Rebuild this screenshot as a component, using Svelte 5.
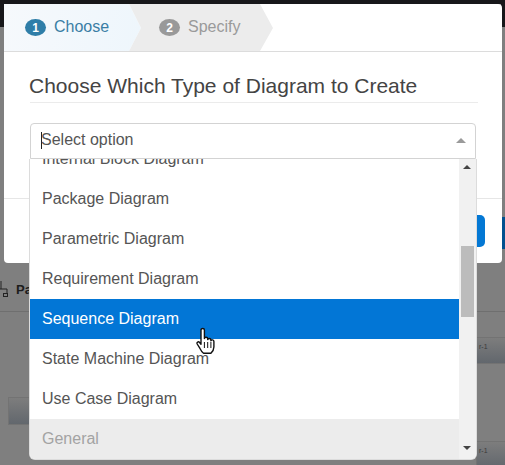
<script>
	const options = [
		{ label: 'Package Diagram' },
		{ label: 'Parametric Diagram' },
		{ label: 'Requirement Diagram' },
		{ label: 'Sequence Diagram', active: true },
		{ label: 'State Machine Diagram' },
		{ label: 'Use Case Diagram' },
		{ label: 'General', group: true }
	];
</script>

<div class="page">
	<div class="topbar"></div>
	<div class="side left"></div>
	<div class="side right"></div>

	<!-- dimmed page behind the modal -->
	<div class="backdrop-tab">
		<svg width="10" height="16" viewBox="0 0 10 16">
			<path d="M1 0v8h6v5M0 8h1" fill="none" stroke="#222" stroke-width="1" />
			<rect x="3.5" y="12.5" width="4" height="3" fill="none" stroke="#222" />
		</svg>
		<b>Pa</b>
	</div>
	<div class="backdrop-line"></div>
	<div class="node node-left"></div>
	<div class="node node-r1"><span>r-1</span></div>
	<div class="node node-r2"><span>r-1</span></div>
	<div class="peek-btn"></div>

	<div class="modal">
		<div class="steps">
			<div class="step current">
				<span class="num">1</span>Choose
			</div>
			<div class="step next">
				<span class="num">2</span>Specify
			</div>
		</div>
		<div class="body">
			<h2>Choose Which Type of Diagram to Create</h2>
			<div class="select">
				<span class="caret"></span><span class="placeholder">Select option</span>
				<span class="arrow"></span>
			</div>
		</div>
		<div class="footer">
			<div class="save"></div>
		</div>
	</div>

	<div class="dropdown">
		<div class="list">
			<div class="clipped">Internal Block Diagram</div>
			{#each options as o}
				<div class="option" class:active={o.active} class:group={o.group}>{o.label}</div>
			{/each}
		</div>
		<div class="scrollbar">
			<span class="up"></span>
			<span class="thumb"></span>
			<span class="down"></span>
		</div>
	</div>

	<svg class="hand" width="22" height="28" viewBox="0 0 22 28">
		<path
			d="M5 3c0-2 3.400-2 3.400 0v8.500c.2-1.700 3.200-1.700 3.300.2v.8c.3-1.500 3.100-1.400 3.200.4v.8c.4-1.300 3-1.100 3 .7v5.600c0 2.800-1.300 4.600-3 6.200H7.500c-1.600-1.200-2.700-3-3.700-5L1.200 17c-.8-1.700 1.200-2.900 2.400-1.500L5 17.300z"
			fill="#fff"
			stroke="#111"
			stroke-width="1.400"
			stroke-linejoin="round"
		/>
		<path d="M8.400 15v6M11.700 15v6M14.900 15v6" stroke="#111" stroke-width="1" />
	</svg>
</div>

<style>
	:global(body) {
		margin: 0;
	}
	.page {
		position: relative;
		width: 505px;
		height: 465px;
		overflow: hidden;
		background: #7f7f7f;
		font-family: 'Liberation Sans', Arial, sans-serif;
	}
	.topbar {
		height: 4px;
		background: #17171a;
	}
	.side {
		position: absolute;
		top: 0;
		height: 27px;
		background: #17171a;
	}
	.side.left {
		left: 0;
		width: 4px;
	}
	.side.right {
		right: 0;
		width: 4px;
	}
	.backdrop-tab {
		position: absolute;
		left: 0;
		top: 281px;
		display: flex;
		align-items: center;
		gap: 6px;
		font-size: 13px;
		color: #1c1c1c;
	}
	.backdrop-line {
		position: absolute;
		left: 0;
		right: 0;
		top: 311px;
		height: 1px;
		background: #6f6f6f;
	}
	.node {
		position: absolute;
		background: linear-gradient(#7d7d7d, #62676d);
		border: 1px solid #737373;
		box-sizing: border-box;
	}
	.node span {
		position: absolute;
		left: 2px;
		top: 5px;
		font-size: 7px;
		color: #3a3a3a;
	}
	.node-left {
		left: 8px;
		top: 397px;
		width: 30px;
		height: 28px;
	}
	.node-r1 {
		left: 476px;
		top: 337px;
		width: 32px;
		height: 27px;
	}
	.node-r2 {
		left: 476px;
		top: 441px;
		width: 32px;
		height: 28px;
	}
	.peek-btn {
		position: absolute;
		right: 0;
		top: 217px;
		width: 3px;
		height: 32px;
		background: #02508f;
	}
	.modal {
		position: absolute;
		left: 4px;
		top: 4px;
		width: 498px;
		height: 259px;
		background: #fff;
		border-radius: 0 4px 4px 4px;
		display: flex;
		flex-direction: column;
	}
	.steps {
		height: 47px;
		flex: none;
		display: flex;
		border-bottom: 1px solid #dcdcdc;
		font-size: 16px;
	}
	.step {
		display: flex;
		align-items: center;
		box-sizing: border-box;
		padding-bottom: 2px;
	}
	.step.current {
		width: 138px;
		padding-left: 21px;
		color: #3a7ea5;
		clip-path: polygon(0 0, 125px 0, 137px 24px, 125px 100%, 0 100%);
		background: linear-gradient(100deg, #f6f9fc, #eef6fc);
	}
	.step.next {
		width: 144px;
		margin-left: -13px;
		padding-left: 30px;
		background: #ececec;
		color: #9a9a9a;
		clip-path: polygon(0 0, 131px 0, 144px 24px, 131px 100%, 0 100%, 12px 24px);
	}
	.num {
		display: inline-flex;
		align-items: center;
		justify-content: center;
		width: 21px;
		height: 17px;
		border-radius: 50%;
		margin-right: 8px;
		margin-top: 2px;
		background: #2f7ea8;
		color: #fff;
		font-size: 12px;
		font-weight: bold;
	}
	.next .num {
		background: #999;
	}
	.body {
		padding: 0 24px 0 26px;
		flex: none;
	}
	h2 {
		margin: 21px 0 0;
		padding-bottom: 3px;
		height: 26px;
		font-size: 21px;
		line-height: 26px;
		font-weight: normal;
		text-indent: -1px;
		color: #444;
		border-bottom: 1px solid #ebebeb;
	}
	.select {
		position: relative;
		box-sizing: border-box;
		width: 446px;
		height: 36px;
		margin-top: 20px;
		display: flex;
		align-items: center;
		padding: 0 0 2px 10px;
		border: 1px solid #d3d3d3;
		border-radius: 4px 4px 0 0;
		font-size: 16px;
		color: #555;
	}
	.caret {
		width: 1px;
		height: 17px;
		margin-right: -1px;
		background: #222;
	}
	.arrow {
		position: absolute;
		right: 9px;
		top: 14px;
		border: 5px solid transparent;
		border-top: 0;
		border-bottom: 5px solid #9a9a9a;
	}
	.footer {
		position: relative;
		margin-top: 39px;
		flex: 1;
		border-top: 1px solid #e6e6e6;
	}
	.save {
		position: absolute;
		left: 473px;
		top: 16px;
		width: 8px;
		height: 32px;
		background: #0478d4;
		border-radius: 0 5px 5px 0;
	}
	.dropdown {
		position: absolute;
		left: 30px;
		top: 159px;
		width: 446px;
		height: 300px;
		display: flex;
		background: #fff;
		border-radius: 0 0 5px 5px;
		overflow: hidden;
		box-shadow: 0 0 0 1px #dcdcdc;
		clip-path: inset(0 -1px -1px -1px);
	}
	.list {
		flex: 1;
		overflow: hidden;
		font-size: 16px;
		color: #555;
	}
	.clipped,
	.option {
		height: 40px;
		line-height: 40px;
		padding-left: 12px;
	}
	.clipped {
		margin-top: -20px;
	}
	.option.active {
		background: #0276d6;
		color: #fff;
	}
	.option.group {
		background: #ececec;
		color: #a3a3a3;
		height: 41px;
	}
	.scrollbar {
		position: relative;
		width: 17px;
		flex: none;
		background: #f1f1f1;
	}
	.thumb {
		position: absolute;
		left: 2px;
		top: 87px;
		width: 13px;
		height: 71px;
		background: #bcbcbc;
	}
	.up,
	.down {
		position: absolute;
		left: 4px;
		border: 4px solid transparent;
	}
	.up {
		top: 6px;
		border-top: 0;
		border-bottom: 4px solid #444;
	}
	.down {
		bottom: 9px;
		border-bottom: 0;
		border-top: 4px solid #444;
	}
	.hand {
		position: absolute;
		left: 196px;
		top: 327px;
	}
</style>
